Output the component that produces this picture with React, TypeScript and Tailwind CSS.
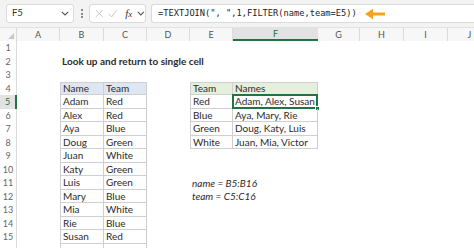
const COLS = [
  { key: 'A', w: 'w-[43px]' },
  { key: 'B', w: 'w-[44px]' },
  { key: 'C', w: 'w-[43px]' },
  { key: 'D', w: 'w-[43px]' },
  { key: 'E', w: 'w-[43px]' },
  { key: 'F', w: 'w-[85px]' },
  { key: 'G', w: 'w-[42px]' },
  { key: 'H', w: 'w-[44px]' },
  { key: 'I', w: 'w-[44px]' },
  { key: 'J', w: 'w-[44px]' },
]

const people = [
  ['Adam', 'Red'],
  ['Alex', 'Red'],
  ['Aya', 'Blue'],
  ['Doug', 'Green'],
  ['Juan', 'White'],
  ['Katy', 'Green'],
  ['Luis', 'Green'],
  ['Mary', 'Blue'],
  ['Mia', 'White'],
  ['Rie', 'Blue'],
  ['Susan', 'Red'],
]

const summary = [
  ['Red', 'Adam, Alex, Susan'],
  ['Blue', 'Aya, Mary, Rie'],
  ['Green', 'Doug, Katy, Luis'],
  ['White', 'Juan, Mia, Victor'],
]

type Cell = { text?: string; cls?: string }

// work out what sits in a given cell
function cellAt(row: number, col: string): Cell {
  if (row === 2 && col === 'B') return { text: 'Look up and return to single cell', cls: 'font-bold overflow-visible' }
  if (row === 11 && col === 'E') return { text: 'name = B5:B16', cls: 'italic overflow-visible' }
  if (row === 12 && col === 'E') return { text: 'team = C5:C16', cls: 'italic overflow-visible' }

  if (row >= 4 && row <= 16 && (col === 'B' || col === 'C')) {
    const head = row === 4
    // row 16 sits under the bottom edge, only its borders peek in
    const text = head ? (col === 'B' ? 'Name' : 'Team') : people[row - 5]?.[col === 'B' ? 0 : 1]
    const left = col === 'B' ? 'border-l' : ''
    const top = head ? 'border-t bg-[#dde6f1]' : ''
    return { text, cls: `border-r border-b border-[#cfcfcf] ${left} ${top}` }
  }

  if (row >= 4 && row <= 8 && (col === 'E' || col === 'F')) {
    const head = row === 4
    const text = head ? (col === 'E' ? 'Team' : 'Names') : summary[row - 5][col === 'E' ? 0 : 1]
    const left = col === 'E' ? 'border-l' : ''
    const top = head ? 'border-t bg-[#e4efdc]' : ''
    return { text, cls: `border-r border-b border-[#cfcfcf] ${left} ${top}` }
  }
  return {}
}

const ChevronDown = ({ className }: { className?: string }) => (
  <svg className={className} width="8" height="5" viewBox="0 0 8 5" fill="none">
    <path d="M0.8 0.8L4 4L7.2 0.8" stroke="#555" strokeWidth="1.1" />
  </svg>
)

const FormulaBar = () => (
  <div className="flex items-center h-[27px] bg-[#f3f3f3] pl-[6px]">
    <div className="flex items-center justify-between w-[68px] h-[19px] bg-white border border-[#dadada] rounded-[3px] pl-[5px] pr-[4px] text-[9.5px] text-[#333]">
      <span>F5</span>
      <ChevronDown />
    </div>
    <div className="flex flex-col gap-[1.5px] w-[15px] items-center">
      <span className="w-[2px] h-[2px] bg-[#666] rounded-full" />
      <span className="w-[2px] h-[2px] bg-[#666] rounded-full" />
      <span className="w-[2px] h-[2px] bg-[#666] rounded-full" />
    </div>
    <div className="flex items-center w-[57px] h-[19px] bg-white border border-[#dadada] rounded-[3px] pl-[5px] gap-[4px]">
      <svg width="9" height="9" viewBox="0 0 9 9">
        <path d="M1 1L8 8M8 1L1 8" stroke="#c4c4c4" strokeWidth="1" />
      </svg>
      <svg width="10" height="9" viewBox="0 0 10 9" fill="none">
        <path d="M1 5L3.8 8L9 1" stroke="#c4c4c4" strokeWidth="1" />
      </svg>
      <span className="ml-[4px] font-['Liberation_Serif',serif] italic text-[11px] text-[#333] leading-none">
        f<span className="text-[9px]">x</span>
      </span>
      <ChevronDown className="ml-[1px]" />
    </div>
    <div className="flex items-center flex-1 h-[19px] ml-[5px] bg-white border border-r-0 border-[#dadada] rounded-l-[3px] pl-[6px]">
      <span className="font-['DejaVu_Sans_Mono',monospace] text-[8.7px] text-[#222] whitespace-pre">
        =TEXTJOIN(", ",1,FILTER(name,team=E5))
      </span>
      <svg className="ml-[7px]" width="22" height="12" viewBox="0 0 22 12">
        <path d="M21 6H8" stroke="#f5a31a" strokeWidth="3" />
        <path d="M1 6L9 0.8V11.2Z" fill="#f5a31a" />
      </svg>
    </div>
  </div>
)

const App = () => {
  const rows = Array.from({ length: 16 }, (_, i) => i + 1)
  return (
    <div className="w-[474px] h-[248px] overflow-hidden bg-white font-['Lato','Noto_Sans',sans-serif]">
      <FormulaBar />
      <div className="flex h-[14px] bg-[#f7f7f7] border-t border-[#e2e2e2]">
        <div className="relative w-[17px] shrink-0 border-r border-[#dcdcdc]">
          <div className="absolute right-[2px] bottom-[2px] w-0 h-0 border-l-[6px] border-l-transparent border-b-[6px] border-b-[#c8c8c8]" />
        </div>
        {COLS.map((c) => (
          <div
            key={c.key}
            className={`${c.w} shrink-0 flex items-center justify-center text-[9px] text-[#555] ${
              c.key === 'F' ? 'bg-[#e2e2e2] border-b-2 border-b-[#217346] text-[#217346]' : 'border-r border-[#dcdcdc]'
            }`}
          >
            {c.key}
          </div>
        ))}
      </div>
      {rows.map((r) => (
        <div key={r} className={`flex ${r % 2 === 1 ? 'h-[14px]' : 'h-[13px]'}`}>
          <div
            className={`w-[17px] shrink-0 flex items-center justify-center text-[9px] ${
              r === 5 ? 'bg-[#e2e2e2] border-r-2 border-[#217346] text-[#217346]' : 'border-r border-[#dcdcdc] text-[#666]'
            }`}
          >
            {r < 16 ? r : ''}
          </div>
          {COLS.map((c) => {
            const cell = cellAt(r, c.key)
            const selected = r === 5 && c.key === 'F'
            return (
              <div
                key={c.key}
                className={`${c.w} shrink-0 relative flex items-center pl-[2px] text-[10px] text-[#2b2b2b] whitespace-nowrap ${cell.cls ?? ''}`}
              >
                {cell.text}
                {selected && (
                  <>
                    <div className="absolute -left-[1px] -top-[1px] -right-[1px] -bottom-[1px] border-2 border-[#217346]" />
                    <div className="absolute -right-[3px] -bottom-[3px] w-[5px] h-[5px] bg-[#217346] border border-white" />
                  </>
                )}
              </div>
            )
          })}
        </div>
      ))}
    </div>
  )
}

export default App
